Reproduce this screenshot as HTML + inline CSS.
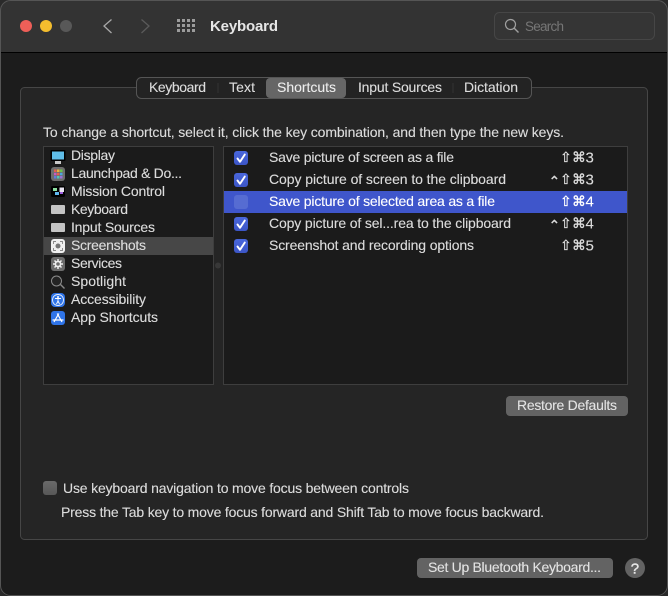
<!DOCTYPE html>
<html><head><meta charset="utf-8"><style>
html,body{margin:0;padding:0;background:#1c1c1c;width:668px;height:596px;overflow:hidden}
svg{display:block}
text{font-family:"Liberation Sans","DejaVu Sans",sans-serif;font-size:14px;fill:#dcdcdc;stroke:#dcdcdc;stroke-width:.12;white-space:pre}
.k{font-family:"DejaVu Sans","Liberation Sans",sans-serif;font-size:14px;stroke-width:.3}
.d{font-family:"Liberation Sans",sans-serif;font-size:15px}
.w{fill:#fff;stroke:#fff}
</style></head><body>
<svg width="668" height="596" viewBox="0 0 668 596" xmlns="http://www.w3.org/2000/svg">
<defs>
<clipPath id="w"><rect x="0" y="0" width="668" height="596" rx="10"/></clipPath>
<linearGradient id="cb" x1="0" y1="0" x2="0" y2="1"><stop offset="0" stop-color="#4a67dc"/><stop offset="1" stop-color="#3c55c6"/></linearGradient>
<linearGradient id="gb" x1="0" y1="0" x2="0" y2="1"><stop offset="0" stop-color="#6a6a6a"/><stop offset="1" stop-color="#585858"/></linearGradient>
</defs>
<rect width="668" height="596" fill="#2a2a2a"/>
<g clip-path="url(#w)">
<rect width="668" height="596" fill="#1c1c1c"/>
<rect width="668" height="52" fill="#333333"/>
<rect y="52" width="668" height="1" fill="#000"/>
<circle cx="26" cy="26" r="6" fill="#ee5f58"/>
<circle cx="46" cy="26" r="6" fill="#f4bd2e"/>
<circle cx="66" cy="26" r="6" fill="#585858"/>
<path d="M111.500 19.500 L104 26 L111.500 33" fill="none" stroke="#a8a8a8" stroke-width="1.300"/>
<path d="M141.500 19.500 L149 26 L141.500 33" fill="none" stroke="#5a5a5a" stroke-width="1.300"/>
<g fill="#9c9c9c">
<rect x="177" y="19" width="3" height="3"/><rect x="182" y="19" width="3" height="3"/><rect x="187" y="19" width="3" height="3"/><rect x="192" y="19" width="3" height="3"/>
<rect x="177" y="24" width="3" height="3"/><rect x="182" y="24" width="3" height="3"/><rect x="187" y="24" width="3" height="3"/><rect x="192" y="24" width="3" height="3"/>
<rect x="177" y="29" width="3" height="3"/><rect x="182" y="29" width="3" height="3"/><rect x="187" y="29" width="3" height="3"/><rect x="192" y="29" width="3" height="3"/>
</g>
<text x="210" y="31" textLength="68" lengthAdjust="spacing" style="font-size:15px;font-weight:bold;fill:#e6e6e6;stroke:none">Keyboard</text>
<rect x="494.500" y="12.500" width="160" height="27" rx="5" fill="#353535" stroke="#464646"/>
<circle cx="510.500" cy="24.500" r="5" fill="none" stroke="#a0a0a0" stroke-width="1.200"/>
<path d="M514 28 L518.500 32.500" stroke="#a0a0a0" stroke-width="1.400"/>
<text x="525" y="31" textLength="39" lengthAdjust="spacing" style="font-size:13.500px;fill:#767676;stroke:none">Search</text>

<rect x="20.500" y="87.500" width="627" height="452" rx="4" fill="#252525" stroke="#464646"/>
<rect x="136.500" y="77.500" width="395" height="21" rx="5" fill="#232323" stroke="#555555"/>
<rect x="266" y="78" width="80" height="20" rx="4" fill="#666666"/>
<rect x="217.500" y="83" width="1" height="10" fill="#333"/>
<rect x="452.500" y="83" width="1" height="10" fill="#333"/>
<text x="149" y="92" textLength="57" lengthAdjust="spacing">Keyboard</text>
<text x="229" y="92" textLength="26" lengthAdjust="spacing">Text</text>
<text x="277" y="92" textLength="59" lengthAdjust="spacing" style="fill:#efefef">Shortcuts</text>
<text x="358" y="92" textLength="84" lengthAdjust="spacing">Input Sources</text>
<text x="464" y="92" textLength="54" lengthAdjust="spacing">Dictation</text>

<text x="43" y="137" textLength="521" lengthAdjust="spacing">To change a shortcut, select it, click the key combination, and then type the new keys.</text>

<rect x="43.500" y="146.500" width="170" height="238" fill="#1b1b1b" stroke="#3e3e3e"/>
<rect x="44" y="237" width="169" height="18" fill="#474747"/>
<circle cx="218" cy="265.500" r="3" fill="#383838"/>

<!-- Display -->
<rect x="50.500" y="150" width="15" height="11" rx="1" fill="#000"/>
<rect x="52" y="151.500" width="12" height="8" fill="#5fbde8"/>
<rect x="55" y="161" width="6" height="3" fill="#c8c8c8"/>
<!-- Launchpad -->
<rect x="51" y="167" width="14" height="14" rx="3" fill="#6e6e6e"/>
<g><rect x="54" y="169.500" width="2.500" height="2.500" fill="#e8604c"/><rect x="57" y="169.500" width="2.500" height="2.500" fill="#e8b43c"/><rect x="60" y="169.500" width="2.500" height="2.500" fill="#6cc24a"/>
<rect x="54" y="172.800" width="2.500" height="2.500" fill="#c95bc0"/><rect x="57" y="172.800" width="2.500" height="2.500" fill="#e8604c"/><rect x="60" y="172.800" width="2.500" height="2.500" fill="#4aa8e0"/>
<rect x="54" y="176" width="2.500" height="2.500" fill="#5f7ce0"/><rect x="57" y="176" width="2.500" height="2.500" fill="#50c8b0"/><rect x="60" y="176" width="2.500" height="2.500" fill="#9a70d8"/></g>
<!-- Mission Control -->
<rect x="51" y="186" width="14" height="11" rx="1.500" fill="#000"/>
<rect x="53" y="188" width="4" height="3" fill="#8ce0a0"/><rect x="59.500" y="187.500" width="4.500" height="4.500" fill="#e8e4f0"/>
<rect x="55" y="192" width="4" height="3" fill="#60b8f0"/><rect x="60" y="192" width="3" height="2" fill="#a060e0"/>
<!-- Keyboards -->
<rect x="51" y="205" width="14" height="9" rx="1" fill="#c4c4c4"/>
<rect x="51" y="223" width="14" height="9" rx="1" fill="#c4c4c4"/>
<!-- Screenshots -->
<rect x="51" y="239" width="14" height="14" rx="3" fill="#f0f0f0"/>
<path d="M53.500 244 v-2.500 h2.500 M60 241.500 h2.500 v2.500 M62.500 248 v2.500 h-2.500 M56 250.500 h-2.500 v-2.500" fill="none" stroke="#666" stroke-width="0.700"/>
<circle cx="58" cy="246" r="2.500" fill="#777"/>
<!-- Services -->
<rect x="51" y="257" width="14" height="14" rx="3" fill="#6c6c6c"/>
<circle cx="58" cy="264" r="3.300" fill="#f0f0f0"/>
<path d="M58 259 v10 M53 264 h10 M54.500 260.500 l7 7 M61.500 260.500 l-7 7" stroke="#f0f0f0" stroke-width="1.500"/>
<circle cx="58" cy="264" r="1.800" fill="#6c6c6c"/>
<!-- Spotlight -->
<circle cx="56.500" cy="281" r="5" fill="#232323" stroke="#8c8c8c" stroke-width="1"/>
<path d="M60.500 284.500 L64.500 288.500" stroke="#888" stroke-width="1.400"/>
<!-- Accessibility -->
<rect x="51" y="293" width="14" height="14" rx="4" fill="#2f74e8"/>
<circle cx="58" cy="300" r="5.500" fill="none" stroke="#e4eefc" stroke-width="0.900"/>
<circle cx="58" cy="297" r="1" fill="#fff"/>
<path d="M55 298.500 h6 M58 298.500 v2.500 l-1.500 3 M58 301 l1.500 3" fill="none" stroke="#fff" stroke-width="0.900"/>
<!-- App Shortcuts -->
<rect x="51" y="311" width="14" height="14" rx="3" fill="#2f74e8"/>
<path d="M58.800 313.500 L54 322 M57.200 313.500 L62 322 M52.500 320 h11" fill="none" stroke="#fff" stroke-width="1.200"/>

<text x="71" y="160" textLength="44" lengthAdjust="spacing">Display</text>
<text x="71" y="178" textLength="111" lengthAdjust="spacing">Launchpad &amp; Do...</text>
<text x="71" y="196" textLength="94" lengthAdjust="spacing">Mission Control</text>
<text x="71" y="214" textLength="57" lengthAdjust="spacing">Keyboard</text>
<text x="71" y="232" textLength="84" lengthAdjust="spacing">Input Sources</text>
<text x="71" y="250" textLength="75" lengthAdjust="spacing">Screenshots</text>
<text x="71" y="268" textLength="51" lengthAdjust="spacing">Services</text>
<text x="71" y="286" textLength="55" lengthAdjust="spacing">Spotlight</text>
<text x="71" y="304" textLength="75" lengthAdjust="spacing">Accessibility</text>
<text x="71" y="322" textLength="87" lengthAdjust="spacing">App Shortcuts</text>

<rect x="223.500" y="146.500" width="404" height="238" fill="#1b1b1b" stroke="#3e3e3e"/>
<rect x="224" y="191" width="403" height="22" fill="#3f56cb"/>

<g>
<rect x="234" y="151" width="14" height="14" rx="3" fill="url(#cb)"/>
<rect x="234" y="173" width="14" height="14" rx="3" fill="url(#cb)"/>
<rect x="234" y="195" width="14" height="14" rx="3" fill="#566cd2"/>
<rect x="234" y="217" width="14" height="14" rx="3" fill="url(#cb)"/>
<rect x="234" y="239" width="14" height="14" rx="3" fill="url(#cb)"/>
<g fill="none" stroke="#fff" stroke-width="1.900" stroke-linecap="round" stroke-linejoin="round">
<path d="M237.500 158.500 L240 161.800 L244.800 154.500"/>
<path d="M237.500 180.500 L240 183.800 L244.800 176.500"/>
<path d="M237.500 224.500 L240 227.800 L244.800 220.500"/>
<path d="M237.500 246.500 L240 249.800 L244.800 242.500"/>
</g>
</g>

<text x="269" y="162" textLength="185" lengthAdjust="spacing">Save picture of screen as a file</text>
<text x="269" y="184" textLength="237" lengthAdjust="spacing">Copy picture of screen to the clipboard</text>
<text class="w" x="269" y="206" textLength="226" lengthAdjust="spacing">Save picture of selected area as a file</text>
<text x="269" y="228" textLength="242" lengthAdjust="spacing">Copy picture of sel...rea to the clipboard</text>
<text x="269" y="250" textLength="205" lengthAdjust="spacing">Screenshot and recording options</text>

<text class="k" x="560 572" y="162">⇧⌘</text><text class="d" x="585.500" y="162.500">3</text>
<text class="k" x="548.500 560 572" y="184" dy="2 -2">⌃⇧⌘</text><text class="d" x="585.500" y="184.500">3</text>
<text class="k w" x="560 572" y="206">⇧⌘</text><text class="d w" x="585.500" y="206.500">4</text>
<text class="k" x="548.500 560 572" y="228" dy="2 -2">⌃⇧⌘</text><text class="d" x="585.500" y="228.500">4</text>
<text class="k" x="560 572" y="250">⇧⌘</text><text class="d" x="585.500" y="250.500">5</text>

<rect x="506" y="396" width="122" height="20" rx="4" fill="#636363"/>
<text x="517" y="410" textLength="100" lengthAdjust="spacing" style="fill:#e4e4e4">Restore Defaults</text>

<rect x="43" y="481" width="14" height="14" rx="3" fill="url(#gb)"/>
<text x="63" y="493" textLength="346" lengthAdjust="spacing">Use keyboard navigation to move focus between controls</text>
<text x="61" y="517" textLength="483" lengthAdjust="spacing">Press the Tab key to move focus forward and Shift Tab to move focus backward.</text>

<rect x="417" y="558" width="196" height="20" rx="4" fill="#636363"/>
<text x="428" y="572" textLength="173" lengthAdjust="spacing" style="fill:#e4e4e4">Set Up Bluetooth Keyboard...</text>
<circle cx="635" cy="568" r="10" fill="#636363"/>
<text x="630.800" y="573.500" style="font-size:15px;fill:#e8e8e8;stroke:#e8e8e8;stroke-width:.4">?</text>
</g>
<rect x="0.500" y="0.500" width="667" height="595" rx="10" fill="none" stroke="#555"/>
</svg>
</body></html>
